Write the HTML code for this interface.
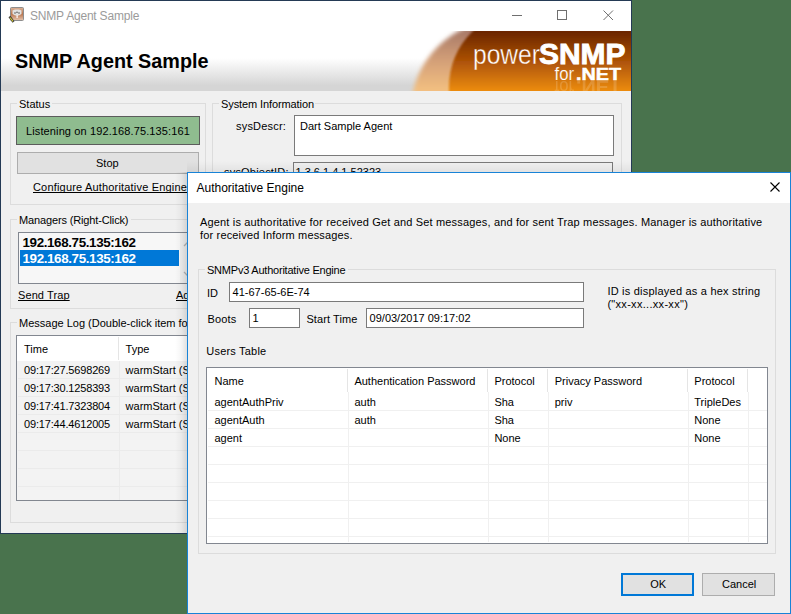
<!DOCTYPE html>
<html><head><meta charset="utf-8">
<style>
*{box-sizing:border-box;margin:0;padding:0}
html,body{width:791px;height:614px;overflow:hidden;background:#49734d;font-family:"Liberation Sans",sans-serif;color:#000}
.a{position:absolute}
.t{position:absolute;white-space:pre;line-height:1;font-size:11px}
#main{left:0;top:0;width:632px;height:534px;background:#f0f0f0;border:1px solid #243a55;overflow:hidden}
.grp{position:absolute;border:1px solid #dcdcdc}
.lbl{position:absolute;background:#f0f0f0}
.tb{position:absolute;background:#fff;border:1px solid #7a7a7a;overflow:hidden}
.btn{position:absolute;background:#e1e1e1;border:1px solid #adadad}
.hl{position:absolute;height:1px;background:#f0f0f0}
.vl{position:absolute;width:1px;background:#f0f0f0}
#dlg{left:187px;top:172px;width:604px;height:442px;background:#f0f0f0;border:1px solid #1883d7}
</style></head><body>

<div id="main" class="a">
<div class="a" style="left:0;top:0;width:630px;height:30px;background:#fff"></div>
<svg class="a" style="left:6px;top:5px" width="18" height="18" viewBox="0 0 18 18">
<defs><linearGradient id="ig" x1="0" y1="0" x2="0" y2="1"><stop offset="0" stop-color="#dcb49a"/><stop offset="0.5" stop-color="#b9754e"/><stop offset="1" stop-color="#e6c7b2"/></linearGradient></defs>
<rect x="3.5" y="1.5" width="13" height="13" rx="1" fill="url(#ig)" stroke="#8e8e8e"/>
<path d="M5.5 4.5 L8 3.5 L12 3.5 L14.5 4.5 L14.5 8 L12 9.5 L8 9.5 L5.5 8 Z" fill="#e2e2e2"/>
<circle cx="8" cy="7" r="0.8" fill="#555"/><circle cx="10" cy="6.2" r="0.8" fill="#555"/><circle cx="12" cy="7" r="0.8" fill="#555"/>
<rect x="9.5" y="9" width="1.2" height="3" fill="#fff"/>
<path d="M2.5 10.5 L6.5 16" stroke="#3a3a3a" stroke-width="2.4"/>
<path d="M3 11.5 L6 15.3" stroke="#d8cc30" stroke-width="1.1"/>
</svg>
<div class="t" style="left:29px;top:9px;font-size:12px;letter-spacing:-0.2px;color:#9b9b9b">SNMP Agent Sample</div>
<div class="a" style="left:511px;top:14px;width:10px;height:1px;background:#6f6f6f"></div>
<div class="a" style="left:556px;top:9px;width:10px;height:10px;border:1px solid #6f6f6f"></div>
<svg class="a" style="left:602px;top:9px" width="11" height="11" viewBox="0 0 11 11"><path d="M0.5 0.5L10 10M10 0.5L0.5 10" stroke="#6f6f6f" stroke-width="1" fill="none"/></svg>
<div class="a" style="left:0;top:30px;width:630px;height:60px;background:linear-gradient(#fff 0,#fff 45%,#d5d5d5 91%,#d5d5d5 100%)"></div>
<div class="t" style="left:14px;top:50.74px;font-size:19.8px;font-weight:bold">SNMP Agent Sample</div>
<svg class="a" style="left:399px;top:30px" width="231" height="60" viewBox="400 31 231 60">
<defs>
<linearGradient id="og" x1="0" y1="31" x2="0" y2="91" gradientUnits="userSpaceOnUse">
<stop offset="0" stop-color="#6a2600"/><stop offset="0.45" stop-color="#a64d06"/><stop offset="1" stop-color="#ec8c0c"/></linearGradient>
<linearGradient id="pg" x1="0" y1="31" x2="0" y2="91" gradientUnits="userSpaceOnUse">
<stop offset="0" stop-color="#a87a68"/><stop offset="0.5" stop-color="#d4a078"/><stop offset="1" stop-color="#f3c081"/></linearGradient>
<clipPath id="cp"><rect x="400" y="31" width="231" height="60"/></clipPath>
<filter id="bl" x="-10%" y="-10%" width="120%" height="120%"><feGaussianBlur stdDeviation="2.2"/></filter>
<filter id="bl2" x="-10%" y="-10%" width="120%" height="120%"><feGaussianBlur stdDeviation="1.2"/></filter>
</defs>
<g clip-path="url(#cp)">
<path d="M650,0 L501.8,0 L501.8,20.2 A90.9,90.9 0 0 0 410.9,111.1 L650,111.1 Z" fill="url(#pg)" filter="url(#bl)"/>
<path d="M650,-5 L525.5,-5 L525.5,10.1 A76.5,76.5 0 0 0 449,86.6 L449,110 L650,110 Z" fill="url(#og)" filter="url(#bl2)"/>
<text x="473" y="64.3" font-family="Liberation Sans" font-size="27.5" textLength="67" lengthAdjust="spacingAndGlyphs" fill="#fff" stroke="url(#og)" stroke-width="0.35">power</text>
<text x="539" y="64.3" font-family="Liberation Sans" font-weight="bold" font-size="29.8" textLength="86.5" lengthAdjust="spacingAndGlyphs" fill="#fff" stroke="#fff" stroke-width="0.9">SNMP</text>
<text x="554.5" y="79.8" font-family="Liberation Sans" font-size="18.5" textLength="19.5" lengthAdjust="spacingAndGlyphs" fill="#fff" stroke="url(#og)" stroke-width="0.2">for</text>
<text x="576" y="79.8" font-family="Liberation Sans" font-weight="bold" font-size="17" textLength="45" lengthAdjust="spacingAndGlyphs" fill="#fff" stroke="#fff" stroke-width="0.5">.NET</text>
<g opacity="0.16" transform="translate(0,160.5) scale(1,-1)">
<text x="554.5" y="79.8" font-family="Liberation Sans" font-size="18.5" textLength="19.5" lengthAdjust="spacingAndGlyphs" fill="#fff">for</text>
<text x="576" y="79.8" font-family="Liberation Sans" font-weight="bold" font-size="17" textLength="45" lengthAdjust="spacingAndGlyphs" fill="#fff">.NET</text>
</g>
</g>
</svg>
<div class="grp" style="left:9px;top:102px;width:196px;height:102px"></div>
<div class="lbl" style="left:16px;top:101px;width:35px;height:4px"></div>
<div class="t" style="left:18px;top:98.19px;font-size:11px;letter-spacing:0px">Status</div>
<div class="a" style="left:15px;top:115px;width:184px;height:29px;background:#8fbc8f;border:1px solid #5c5c5c"></div>
<div class="t" style="left:25px;top:125.19px;font-size:11px;letter-spacing:0.12px">Listening on 192.168.75.135:161</div>
<div class="btn" style="left:16px;top:151px;width:182px;height:22px"></div>
<div class="t" style="left:95px;top:157.19px;font-size:11px;">Stop</div>
<div class="t" style="left:32px;top:181.19px;font-size:11px;text-decoration:underline;text-decoration-skip-ink:none;letter-spacing:0.18px">Configure Authoritative Engine</div>
<div class="grp" style="left:9px;top:218px;width:196px;height:90px"></div>
<div class="lbl" style="left:16px;top:217px;width:114px;height:4px"></div>
<div class="t" style="left:18px;top:214.19px;font-size:11px;letter-spacing:-0.14px">Managers (Right-Click)</div>
<div class="tb" style="left:17px;top:231px;width:200px;height:52px;background:#f7f7f7;border-color:#828790"></div>
<div class="a" style="left:179px;top:232px;width:17px;height:50px;background:#efefef"></div>
<svg class="a" style="left:182px;top:239px" width="8" height="40"><path d="M1 6 L4 3 L7 6 M1 32 L4 35 L7 32" stroke="#b4b4b4" stroke-width="1.3" fill="none"/></svg>
<div class="a" style="left:19px;top:249px;width:159px;height:16px;background:#0078d7"></div>
<div class="t" style="left:21.5px;top:234.66px;font-size:13.4px;font-weight:bold;letter-spacing:-0.38px">192.168.75.135:162</div>
<div class="t" style="left:21.5px;top:250.66px;font-size:13.4px;font-weight:bold;letter-spacing:-0.38px;color:#fff">192.168.75.135:162</div>
<div class="t" style="left:17px;top:289.19px;font-size:11px;text-decoration:underline;text-decoration-skip-ink:none;letter-spacing:0.1px">Send Trap</div>
<div class="t" style="left:175px;top:289.19px;font-size:11px;text-decoration:underline">Add</div>
<div class="grp" style="left:9px;top:321px;width:251px;height:201px"></div>
<div class="lbl" style="left:16px;top:320px;width:224px;height:4px"></div>
<div class="t" style="left:18px;top:317.19px;font-size:11px;letter-spacing:0px">Message Log (Double-click item for details)</div>
<div class="tb" style="left:15px;top:334px;width:260px;height:166px;background:#f3f3f3;border-color:#828790">
<div class="a" style="left:0;top:0;width:260px;height:25px;background:#fff"></div>
<div class="vl" style="left:101px;top:1px;height:23px;background:#e5e5e5"></div>
<div class="t" style="left:7px;top:7.69px;font-size:11px;">Time</div>
<div class="t" style="left:108.6px;top:7.69px;font-size:11px;">Type</div>
<div class="vl" style="left:102px;top:25px;height:140px;background:#ebebeb"></div>
<div class="hl" style="left:1px;top:42px;width:258px;background:#ebebeb"></div>
<div class="hl" style="left:1px;top:60px;width:258px;background:#ebebeb"></div>
<div class="hl" style="left:1px;top:78px;width:258px;background:#ebebeb"></div>
<div class="hl" style="left:1px;top:96px;width:258px;background:#ebebeb"></div>
<div class="hl" style="left:1px;top:114px;width:258px;background:#ebebeb"></div>
<div class="hl" style="left:1px;top:132px;width:258px;background:#ebebeb"></div>
<div class="hl" style="left:1px;top:150px;width:258px;background:#ebebeb"></div>
<div class="t" style="left:7px;top:29.19px;font-size:11px;letter-spacing:-0.17px">09:17:27.5698269</div>
<div class="t" style="left:108.6px;top:29.19px;font-size:11px;">warmStart (S</div>
<div class="t" style="left:7px;top:47.19px;font-size:11px;letter-spacing:-0.17px">09:17:30.1258393</div>
<div class="t" style="left:108.6px;top:47.19px;font-size:11px;">warmStart (S</div>
<div class="t" style="left:7px;top:65.19px;font-size:11px;letter-spacing:-0.17px">09:17:41.7323804</div>
<div class="t" style="left:108.6px;top:65.19px;font-size:11px;">warmStart (S</div>
<div class="t" style="left:7px;top:83.19px;font-size:11px;letter-spacing:-0.17px">09:17:44.4612005</div>
<div class="t" style="left:108.6px;top:83.19px;font-size:11px;">warmStart (S</div>
</div>
<div class="grp" style="left:211px;top:102px;width:410px;height:318px"></div>
<div class="lbl" style="left:218px;top:101px;width:96px;height:4px"></div>
<div class="t" style="left:220px;top:98.19px;font-size:11px;letter-spacing:-0.1px">System Information</div>
<div class="t" style="left:235px;top:119.69px;font-size:11px;letter-spacing:0.2px">sysDescr:</div>
<div class="tb" style="left:293px;top:114px;width:320px;height:41px"></div>
<div class="t" style="left:299px;top:119.69px;font-size:11px;">Dart Sample Agent</div>
<div class="t" style="left:223px;top:165.69px;font-size:11px;letter-spacing:0.2px">sysObjectID:</div>
<div class="tb" style="left:292px;top:161px;width:320px;height:22px;background:#f0f0f0"></div>
<div class="t" style="left:294.5px;top:165.69px;font-size:11px;">1.3.6.1.4.1.52323</div>
<div class="a" style="left:174px;top:171px;width:12px;height:362px;background:linear-gradient(90deg,rgba(0,0,0,0),rgba(0,0,0,0.035) 50%,rgba(0,0,0,0.12))"></div>
<div class="a" style="left:186px;top:160px;width:444px;height:11px;background:linear-gradient(rgba(0,0,0,0),rgba(0,0,0,0.06))"></div>
</div>
<div id="dlg" class="a">
<div class="a" style="left:0;top:0;width:602px;height:30px;background:#fff"></div>
<div class="t" style="left:8.5px;top:9.34px;font-size:12px;">Authoritative Engine</div>
<svg class="a" style="left:582px;top:9px" width="11" height="11" viewBox="0 0 11 11"><path d="M0.5 0.5L9.5 9.5M9.5 0.5L0.5 9.5" stroke="#000" stroke-width="1.1" fill="none"/></svg>
<div class="t" style="left:12px;top:44.19px;font-size:11px;letter-spacing:0.165px">Agent is authoritative for received Get and Set messages, and for sent Trap messages. Manager is authoritative</div>
<div class="t" style="left:12px;top:56.69px;font-size:11px;letter-spacing:0.165px">for received Inform messages.</div>
<div class="grp" style="left:10px;top:96px;width:578px;height:285px"></div>
<div class="lbl" style="left:17px;top:95px;width:143px;height:4px"></div>
<div class="t" style="left:19px;top:92.19px;font-size:11px;letter-spacing:-0.22px">SNMPv3 Authoritative Engine</div>
<div class="t" style="left:19px;top:114.89px;font-size:11px;">ID</div>
<div class="tb" style="left:41px;top:109px;width:355px;height:20px"></div>
<div class="t" style="left:44.599999999999994px;top:114.19px;font-size:11px;">41-67-65-6E-74</div>
<div class="t" style="left:19.400000000000006px;top:140.69px;font-size:11px;letter-spacing:0.2px">Boots</div>
<div class="tb" style="left:61px;top:135px;width:51px;height:20px"></div>
<div class="t" style="left:64.6px;top:140.19px;font-size:11px;">1</div>
<div class="t" style="left:118.39999999999998px;top:140.99px;font-size:11px;letter-spacing:0.1px">Start Time</div>
<div class="tb" style="left:178px;top:135px;width:218px;height:20px"></div>
<div class="t" style="left:181.60000000000002px;top:140.19px;font-size:11px;">09/03/2017 09:17:02</div>
<div class="t" style="left:419.4px;top:113.19px;font-size:11px;letter-spacing:0.22px">ID is displayed as a hex string</div>
<div class="t" style="left:419.4px;top:126.19px;font-size:11px;letter-spacing:0.3px">("xx-xx...xx-xx")</div>
<div class="t" style="left:18.30000000000001px;top:172.69px;font-size:11px;letter-spacing:0.2px">Users Table</div>
<div class="tb" style="left:18px;top:194px;width:562px;height:177px;border-color:#828790">
<div class="vl" style="left:140px;top:1px;height:23px;background:#e5e5e5"></div>
<div class="vl" style="left:141px;top:24px;height:150px"></div>
<div class="vl" style="left:280px;top:1px;height:23px;background:#e5e5e5"></div>
<div class="vl" style="left:281px;top:24px;height:150px"></div>
<div class="vl" style="left:340px;top:1px;height:23px;background:#e5e5e5"></div>
<div class="vl" style="left:341px;top:24px;height:150px"></div>
<div class="vl" style="left:480px;top:1px;height:23px;background:#e5e5e5"></div>
<div class="vl" style="left:481px;top:24px;height:150px"></div>
<div class="vl" style="left:540px;top:1px;height:23px;background:#e5e5e5"></div>
<div class="vl" style="left:541px;top:24px;height:150px"></div>
<div class="hl" style="left:1px;top:42px;width:560px"></div>
<div class="hl" style="left:1px;top:60px;width:560px"></div>
<div class="hl" style="left:1px;top:78px;width:560px"></div>
<div class="hl" style="left:1px;top:96px;width:560px"></div>
<div class="hl" style="left:1px;top:114px;width:560px"></div>
<div class="hl" style="left:1px;top:132px;width:560px"></div>
<div class="hl" style="left:1px;top:150px;width:560px"></div>
<div class="hl" style="left:1px;top:168px;width:560px"></div>
<div class="t" style="left:7.5px;top:8.19px;font-size:11px;">Name</div>
<div class="t" style="left:147.4px;top:8.19px;font-size:11px;">Authentication Password</div>
<div class="t" style="left:287.4px;top:8.19px;font-size:11px;">Protocol</div>
<div class="t" style="left:347.7px;top:8.19px;font-size:11px;">Privacy Password</div>
<div class="t" style="left:487.3px;top:8.19px;font-size:11px;">Protocol</div>
<div class="t" style="left:7.5px;top:28.69px;font-size:11px;">agentAuthPriv</div>
<div class="t" style="left:147.4px;top:28.69px;font-size:11px;">auth</div>
<div class="t" style="left:287.4px;top:28.69px;font-size:11px;">Sha</div>
<div class="t" style="left:347.7px;top:28.69px;font-size:11px;">priv</div>
<div class="t" style="left:487.3px;top:28.69px;font-size:11px;">TripleDes</div>
<div class="t" style="left:7.5px;top:46.69px;font-size:11px;">agentAuth</div>
<div class="t" style="left:147.4px;top:46.69px;font-size:11px;">auth</div>
<div class="t" style="left:287.4px;top:46.69px;font-size:11px;">Sha</div>
<div class="t" style="left:487.3px;top:46.69px;font-size:11px;">None</div>
<div class="t" style="left:7.5px;top:64.69px;font-size:11px;">agent</div>
<div class="t" style="left:287.4px;top:64.69px;font-size:11px;">None</div>
<div class="t" style="left:487.3px;top:64.69px;font-size:11px;">None</div>
</div>
<div class="btn" style="left:433px;top:400px;width:73px;height:23px;border:2px solid #0078d7"></div>
<div class="t" style="left:462.20000000000005px;top:406.39px;font-size:11px;">OK</div>
<div class="btn" style="left:514px;top:400px;width:73px;height:23px"></div>
<div class="t" style="left:534px;top:406.39px;font-size:11px;">Cancel</div>
</div>
</body></html>
